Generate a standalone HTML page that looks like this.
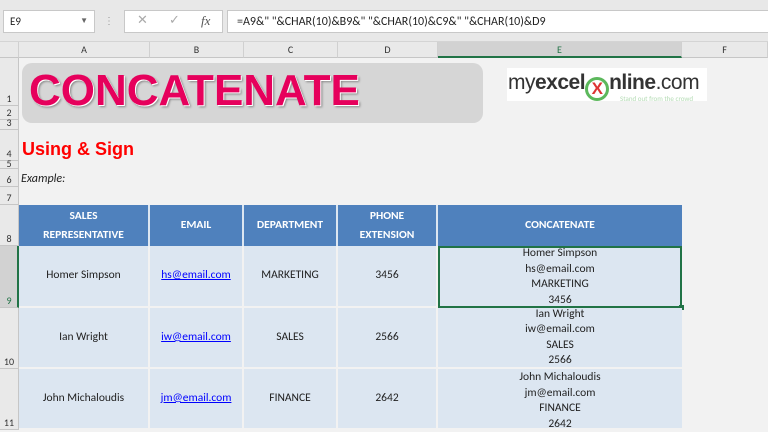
<!DOCTYPE html>
<html><head><style>
*{margin:0;padding:0;box-sizing:border-box}
body{width:768px;height:428px;overflow:hidden;background:#f2f2f2;font-family:Calibri,"Liberation Sans",sans-serif;position:relative;font-size:11px;color:#222}
.a{position:absolute}
.tb{left:0;top:0;width:768px;height:42px;background:#e8e8e8;border-bottom:1px solid #d4d4d4}
.box{background:#fff;border:1px solid #c8c8c8}
.ch{top:42px;height:16px;background:#e9e9e9;border-bottom:1px solid #c6c6c6;color:#333;font-size:10px;text-align:center;line-height:15px;border-right:1px solid #d0d0d0}
.rh{left:0;width:19px;background:#e9e9e9;border-bottom:1px solid #c6c6c6;border-right:1px solid #c6c6c6;color:#333;font-size:10px;text-align:center}
.rh span{position:absolute;bottom:0;left:0;width:18px;line-height:12px}
.hd{background:#4f81bd;color:#fff;font-weight:bold;font-size:11.5px;display:flex;align-items:center;justify-content:center;text-align:center;line-height:19px;border-right:2px solid #dce6f1}
.cl{background:#dce6f1;display:flex;align-items:center;justify-content:center;text-align:center;font-size:11.5px;border-right:2px solid #f2f2f2;border-bottom:2px solid #f2f2f2;line-height:15.5px;color:#222}
</style></head><body>
<div class="a tb"></div>
<div class="a box" style="left:3px;top:10px;width:92px;height:23px;padding:4px 6px;font-size:11px">E9<span style="position:absolute;right:6px;top:5px;font-size:8px;color:#666">▼</span></div>
<div class="a" style="left:104px;top:14px;color:#999;font-size:10px">⋮</div>
<div class="a box" style="left:124px;top:10px;width:99px;height:23px;color:#aaa;font-size:13px"><span style="position:absolute;left:12px;top:2px">✕</span><span style="position:absolute;left:44px;top:2px">✓</span><span style="position:absolute;left:76px;top:2px;color:#555;font-style:italic;font-family:'Liberation Serif',serif">fx</span></div>
<div class="a box" style="left:227px;top:10px;width:545px;height:23px;padding:4px 9px;font-size:12px;color:#222">=A9&amp;" "&amp;CHAR(10)&amp;B9&amp;" "&amp;CHAR(10)&amp;C9&amp;" "&amp;CHAR(10)&amp;D9</div>
<div class="a ch" style="left:0;width:19px"></div>
<div class="a ch" style="left:19px;width:131px">A</div>
<div class="a ch" style="left:150px;width:94px">B</div>
<div class="a ch" style="left:244px;width:94px">C</div>
<div class="a ch" style="left:338px;width:100px">D</div>
<div class="a ch" style="left:438px;width:244px;background:#d2d2d2;border-bottom:2px solid #217346;color:#217346">E</div>
<div class="a ch" style="left:682px;width:86px">F</div>
<div class="a rh" style="top:58px;height:48px"><span>1</span></div>
<div class="a rh" style="top:106px;height:14px"><span>2</span></div>
<div class="a rh" style="top:120px;height:10px"><span>3</span></div>
<div class="a rh" style="top:130px;height:31px"><span>4</span></div>
<div class="a rh" style="top:161px;height:8px"><span style="line-height:8px">5</span></div>
<div class="a rh" style="top:169px;height:18px"><span>6</span></div>
<div class="a rh" style="top:187px;height:18px"><span>7</span></div>
<div class="a rh" style="top:205px;height:41px"><span>8</span></div>
<div class="a rh" style="top:246px;height:62px;background:#d2d2d2;border-right:2px solid #217346;color:#217346"><span>9</span></div>
<div class="a rh" style="top:308px;height:61px"><span>10</span></div>
<div class="a rh" style="top:369px;height:61px"><span>11</span></div>
<div class="a" style="left:22px;top:63px;width:461px;height:60px;background:#d6d6d6;border-radius:10px"></div>
<div class="a" style="left:29px;top:66px;font-size:44px;font-weight:bold;color:#e6005c;font-family:'Liberation Sans',sans-serif;text-shadow:1px 1px 0 #fff,2px 2px 2px #888">CONCATENATE</div>
<div class="a" style="left:507px;top:68px;width:200px;height:33px;background:#fff"></div>
<div class="a" style="left:508px;top:71px;font-size:21px;color:#333;font-family:'Liberation Sans',sans-serif;letter-spacing:-0.5px">my<b>excel</b><span style="display:inline-block;width:24px;height:24px;border:3px solid #5cb85c;border-radius:50%;vertical-align:-5px;text-align:center;line-height:17px;color:#d33;font-weight:bold;font-size:17px">X</span><b>nline</b>.com</div>
<div class="a" style="left:620px;top:94px;font-size:7px;color:#b5dcb5">Stand out from the crowd</div>
<div class="a" style="left:22px;top:139px;font-size:18px;font-weight:bold;color:#f00;font-family:'Liberation Sans',sans-serif">Using &amp; Sign</div>
<div class="a" style="left:21px;top:172px;font-size:12px;font-style:italic">Example:</div>
<div class="a hd" style="left:19px;top:205px;width:131px;height:41px">SALES<br>REPRESENTATIVE</div>
<div class="a hd" style="left:150px;top:205px;width:94px;height:41px">EMAIL</div>
<div class="a hd" style="left:244px;top:205px;width:94px;height:41px">DEPARTMENT</div>
<div class="a hd" style="left:338px;top:205px;width:100px;height:41px">PHONE<br>EXTENSION</div>
<div class="a hd" style="left:438px;top:205px;width:244px;height:41px;border-right:0">CONCATENATE</div>

<div class="a cl" style="left:19px;top:246px;width:131px;height:62px">Homer Simpson</div>
<div class="a cl" style="left:150px;top:246px;width:94px;height:62px;color:#00f;text-decoration:underline">hs@email.com</div>
<div class="a cl" style="left:244px;top:246px;width:94px;height:62px">MARKETING</div>
<div class="a cl" style="left:338px;top:246px;width:100px;height:62px">3456</div>
<div class="a cl" style="left:438px;top:246px;width:244px;height:62px;border:2px solid #217346">Homer Simpson<br>hs@email.com<br>MARKETING<br>3456</div>
<div class="a" style="left:679px;top:305px;width:5px;height:5px;background:#217346"></div>

<div class="a cl" style="left:19px;top:308px;width:131px;height:61px">Ian Wright</div>
<div class="a cl" style="left:150px;top:308px;width:94px;height:61px;color:#00f;text-decoration:underline">iw@email.com</div>
<div class="a cl" style="left:244px;top:308px;width:94px;height:61px">SALES</div>
<div class="a cl" style="left:338px;top:308px;width:100px;height:61px">2566</div>
<div class="a cl" style="left:438px;top:308px;width:244px;height:61px;border-right:0">Ian Wright<br>iw@email.com<br>SALES<br>2566</div>

<div class="a cl" style="left:19px;top:369px;width:131px;height:61px">John Michaloudis</div>
<div class="a cl" style="left:150px;top:369px;width:94px;height:61px;color:#00f;text-decoration:underline">jm@email.com</div>
<div class="a cl" style="left:244px;top:369px;width:94px;height:61px">FINANCE</div>
<div class="a cl" style="left:338px;top:369px;width:100px;height:61px">2642</div>
<div class="a cl" style="left:438px;top:369px;width:244px;height:61px;border-right:0;align-items:flex-start;padding-top:1px">John Michaloudis<br>jm@email.com<br>FINANCE<br>2642</div>
</body></html>
